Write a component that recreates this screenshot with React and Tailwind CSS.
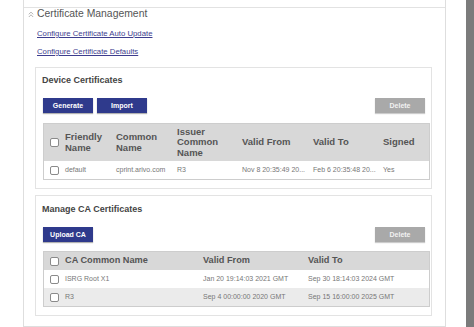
const deviceCerts = [
  {
    friendly: 'default',
    common: 'cprint.arivo.com',
    issuer: 'R3',
    from: 'Nov 8 20:35:49 20...',
    to: 'Feb 6 20:35:48 20...',
    signed: 'Yes',
  },
];

const caCerts = [
  { name: 'ISRG Root X1', from: 'Jan 20 19:14:03 2021 GMT', to: 'Sep 30 18:14:03 2024 GMT' },
  { name: 'R3', from: 'Sep 4 00:00:00 2020 GMT', to: 'Sep 15 16:00:00 2025 GMT' },
];

function Check() {
  return <span className="block h-[9px] w-[9px] rounded-[2px] border border-[#8a8a8a] bg-white" />;
}

function Btn({ children, muted }) {
  return (
    <button
      className={
        muted
          ? 'block h-[15px] w-[50px] bg-[#a9a9a9] text-[7px] font-bold leading-[15px] text-[#f2f2f2] shadow-[0_1px_1px_rgba(0,0,0,0.2)]'
          : 'block h-[15px] w-[50px] bg-[#2f3a8c] text-[7px] font-bold leading-[15px] text-white shadow-[0_1px_1px_rgba(0,0,0,0.3)]'
      }
    >
      {children}
    </button>
  );
}

function Panel({ title, children, className }) {
  return (
    <div className={'w-[397px] border border-[#e3e3e3] pb-[8px] pl-[6px] ' + className}>
      <div className="flex h-[12px] items-center text-[9px] font-bold text-[#444]">{title}</div>
      {children}
    </div>
  );
}

export default function App() {
  const devCols = 'grid grid-cols-[21px_51px_61px_65px_71px_70px_1fr]';
  const caCols = 'grid grid-cols-[21px_138px_105px_1fr]';

  return (
    <div className="h-[327px] w-[474px] overflow-hidden bg-white font-['Liberation_Sans',Arial,sans-serif]">
      <div className="flex">
        <div className="ml-[23px] w-[423px] border-x border-b border-[#dedede]">
          <div className="h-[8px] border-b border-[#e2e2e2]" />
          <div className="flex h-[12px] items-center gap-[3px] pl-[4px] text-[10.4px] text-[#555]">
            <svg width="6" height="7" viewBox="0 0 6 7" fill="none" stroke="#aaa" strokeWidth="0.9">
              <path d="M0.8 3.3 L3 1.1 L5.2 3.3" />
              <path d="M0.8 6 L3 3.8 L5.2 6" />
            </svg>
            <span>Certificate Management</span>
          </div>

          <div className="pl-[13px]">
            <a href="#" className="mt-[9px] block h-[10px] text-[7.75px] leading-[10px] text-[#3d3d8e] underline">
              Configure Certificate Auto Update
            </a>
            <a href="#" className="mt-[8px] block h-[10px] text-[7.75px] leading-[10px] text-[#3d3d8e] underline">
              Configure Certificate Defaults
            </a>
          </div>

          <div className="ml-[11px] mt-[10px]">
            <Panel title="Device Certificates" className="pt-[7px]">
              <div className="ml-[1px] mt-[11px] flex items-start pr-[6px]">
                <div className="flex gap-[4px]">
                  <Btn>Generate</Btn>
                  <Btn>Import</Btn>
                </div>
                <div className="ml-auto">
                  <Btn muted>Delete</Btn>
                </div>
              </div>
              <div className="ml-[1px] mt-[10px] w-[387px] border border-[#cdcdcd]">
                <div className={devCols + ' h-[37px] items-center bg-[#d8d8d8] text-[9.5px] font-bold leading-[10.5px] text-[#555]'}>
                  <div className="pl-[6px]"><Check /></div>
                  <div>Friendly<br />Name</div>
                  <div>Common<br />Name</div>
                  <div>Issuer<br />Common<br />Name</div>
                  <div>Valid From</div>
                  <div>Valid To</div>
                  <div>Signed</div>
                </div>
                {deviceCerts.map((c) => (
                  <div key={c.friendly} className={devCols + ' h-[18px] items-center bg-white text-[7px] text-[#777]'}>
                    <div className="pl-[6px]"><Check /></div>
                    <div>{c.friendly}</div>
                    <div>{c.common}</div>
                    <div>{c.issuer}</div>
                    <div>{c.from}</div>
                    <div>{c.to}</div>
                    <div>{c.signed}</div>
                  </div>
                ))}
              </div>
            </Panel>

            <Panel title="Manage CA Certificates" className="mt-[6px] pt-[8px]">
              <div className="ml-[1px] mt-[11px] flex items-start pr-[6px]">
                <Btn>Upload CA</Btn>
                <div className="ml-auto">
                  <Btn muted>Delete</Btn>
                </div>
              </div>
              <div className="ml-[1px] mt-[9px] w-[387px] border border-[#cdcdcd]">
                <div className={caCols + ' h-[18px] items-center bg-[#d8d8d8] text-[9.2px] font-bold text-[#555]'}>
                  <div className="pl-[6px]"><Check /></div>
                  <div>CA Common Name</div>
                  <div>Valid From</div>
                  <div>Valid To</div>
                </div>
                {caCerts.map((c, i) => (
                  <div
                    key={c.name}
                    className={caCols + ' h-[18px] items-center text-[7px] text-[#777] ' + (i % 2 ? 'bg-[#ebebeb]' : 'bg-white')}
                  >
                    <div className="pl-[6px]"><Check /></div>
                    <div>{c.name}</div>
                    <div>{c.from}</div>
                    <div>{c.to}</div>
                  </div>
                ))}
              </div>
            </Panel>
            <div className="h-[9px]" />
          </div>
        </div>
        <div className="ml-auto h-[327px] w-[8px] bg-[#7b7b7b]" />
      </div>
    </div>
  );
}
